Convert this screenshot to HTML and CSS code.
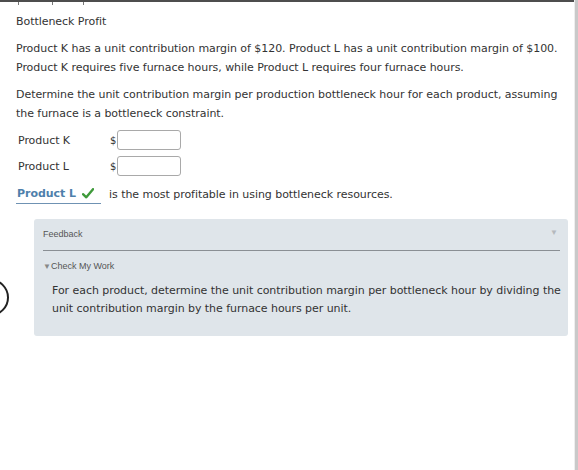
FILE: index.html
```html
<!DOCTYPE html>
<html>
<head>
<meta charset="utf-8">
<link rel="stylesheet" href="styles.css">
</head>
<body>
<div class="topbar">
  <span class="tick t1"></span><span class="tick t2"></span><span class="tick t3"></span>
</div>
<div class="page">
  <div class="content">
    <p class="title">Bottleneck Profit</p>
    <p class="para">Product K has a unit contribution margin of $120. Product L has a unit contribution margin of $100. Product K requires five furnace hours, while Product L requires four furnace hours.</p>
    <p class="para">Determine the unit contribution margin per production bottleneck hour for each product, assuming the furnace is a bottleneck constraint.</p>
    <div class="row">
      <span class="label">Product K</span>
      <span class="dollar">$</span><span class="input"></span>
    </div>
    <div class="row">
      <span class="label">Product L</span>
      <span class="dollar">$</span><span class="input"></span>
    </div>
    <div class="answer-row">
      <span class="answer">Product L <svg class="check" width="12" height="11" viewBox="0 0 12 11"><path d="M1 6.2 L4.3 9.3 L11 1.2" fill="none" stroke="#3f9a3a" stroke-width="2.4" stroke-linecap="round" stroke-linejoin="round"/></svg></span>
      <span class="answer-text">is the most profitable in using bottleneck resources.</span>
    </div>
    <div class="feedback">
      <div class="fb-head">
        <span>Feedback</span>
        <span class="fb-arrow">▼</span>
      </div>
      <div class="fb-sub"><span class="tri">▼</span>Check My Work</div>
      <p class="fb-text">For each product, determine the unit contribution margin per bottleneck hour by dividing the unit contribution margin by the furnace hours per unit.</p>
    </div>
  </div>
  <div class="circle"></div>
</div>
<div class="rightedge"></div>
</body>
</html>
```
FILE: styles.css
```css
html, body {
  margin: 0;
  padding: 0;
  background: #fff;
}
body {
  width: 578px;
  height: 470px;
  overflow: hidden;
  position: relative;
  font-family: "DejaVu Sans", Verdana, sans-serif;
  color: #333;
}
.topbar {
  height: 2px;
  background: #4d4d4d;
  position: relative;
}
.tick {
  position: absolute;
  top: 2px;
  width: 1px;
  height: 3px;
  background: #777;
}
.t1 { left: 18px; }
.t2 { left: 52px; }
.t3 { left: 83px; }
.page {
  position: relative;
}
.content {
  padding: 0 10px 0 16px;
  width: 552px;
}
.title {
  margin: 13px 0 0;
  font-size: 11px;
  line-height: 14px;
  letter-spacing: -0.05px;
}
.para {
  margin: 11px 0 0;
  font-size: 11px;
  line-height: 18.5px;
  letter-spacing: -0.05px;
}
.para + .para {
  margin-top: 9px;
}
.row {
  display: flex;
  align-items: center;
  height: 20px;
  font-size: 11px;
  letter-spacing: -0.05px;
  margin-top: 7px;
}
.row + .row {
  margin-top: 6px;
}
.label {
  width: 92px;
  padding-left: 2px;
}
.dollar {
  font-size: 10px;
  width: 7px;
}
.input {
  width: 62px;
  height: 18px;
  border: 1px solid #a9a9a9;
  border-radius: 3px;
  background: #fff;
}
.answer-row {
  display: flex;
  align-items: center;
  margin-top: 10px;
  font-size: 11px;
  letter-spacing: -0.05px;
}
.answer {
  display: inline-flex;
  align-items: center;
  width: 85px;
  padding: 1px 0 3px 1px;
  border-bottom: 1px solid #6f92b3;
  color: #4e7fab;
  font-weight: bold;
  box-sizing: border-box;
}
.check {
  margin-left: 6px;
}
.answer-text {
  margin-left: 8px;
  margin-top: -2px;
}
.feedback {
  margin: 15px 0 0 18px;
  width: 534px;
  background: #dfe5ea;
  border-radius: 3px;
  padding: 10px 8px 18px 9px;
  box-sizing: border-box;
}
.fb-head {
  display: flex;
  justify-content: space-between;
  align-items: center;
  font-family: "Liberation Sans", Arial, sans-serif;
  font-size: 9px;
  color: #555;
  padding-bottom: 11px;
  border-bottom: 1px solid #8a8f94;
}
.fb-arrow {
  color: #b5b9bd;
  font-size: 8px;
  margin-top: -4px;
  margin-right: 2px;
}
.fb-sub {
  font-family: "Liberation Sans", Arial, sans-serif;
  font-size: 9px;
  color: #555;
  margin-top: 10px;
}
.tri {
  font-size: 8px;
  color: #888;
}
.fb-text {
  margin: 11px -8px 0 9px;
  font-size: 11px;
  line-height: 18px;
  letter-spacing: -0.05px;
}
.circle {
  position: absolute;
  left: -28px;
  top: 264px;
  width: 33px;
  height: 33px;
  border: 2px solid #222;
  border-radius: 50%;
}
.rightedge {
  position: absolute;
  top: 0;
  right: 0;
  width: 3px;
  height: 470px;
  background: #c9c9c9;
  border-left: 1px solid #eee;
}
```
